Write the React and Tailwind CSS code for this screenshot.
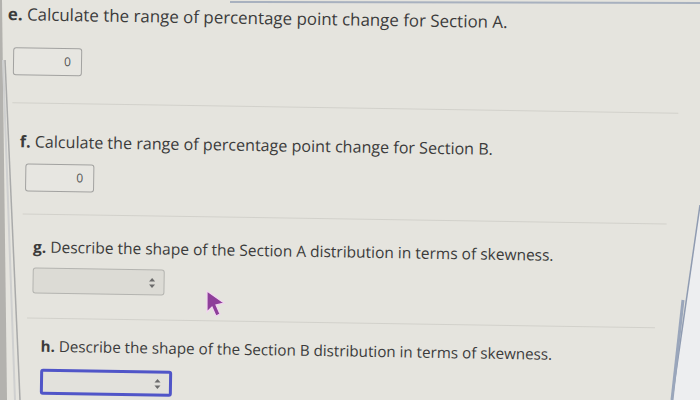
const font = { fontFamily: '"Open Sans", "Liberation Sans", sans-serif' };

function Prompt({ letter, children, className }) {
  return (
    <p className={`leading-6 text-[#3b3b3b] ${className}`}>
      <span className="font-bold">{letter}.</span> {children}
    </p>
  );
}

function NumberBox({ className }) {
  return (
    <div className={`flex h-[28px] w-[69px] items-center justify-end rounded-[3px] border-[1.5px] border-[#a2a2a0] bg-[#e7e6e1] pr-[10px] text-[12px] text-[#555] ${className}`}>
      0
    </div>
  );
}

function Arrows() {
  return (
    <svg width="7" height="11" viewBox="0 0 7 11" className="text-[#6b6b6b]">
      <path d="M3.5 0.5 L6.5 4 L0.5 4 Z" fill="currentColor" />
      <path d="M3.5 10.5 L6.5 7 L0.5 7 Z" fill="currentColor" />
    </svg>
  );
}

function SelectBox({ focused, className }) {
  return (
    <div
      className={`flex h-[26px] w-[132px] items-center justify-end rounded-[3px] pr-[8px] ${
        focused ? "border-[3px] border-[#5055c8] bg-[#e2e1dc]" : "border-[1.5px] border-[#b4b4b0] bg-[#dcdbd5]"
      } ${className}`}
    >
      <Arrows />
    </div>
  );
}

export default function App() {
  return (
    <div className="relative h-[400px] w-[700px] overflow-hidden bg-[#e5e4de]" style={font}>
      <div className="origin-top-left rotate-[0.9deg]">
        <section className="pl-[8px] pt-[2px]">
          <Prompt letter="e" className="text-[16.9px]">Calculate the range of percentage point change for Section A.</Prompt>
          <NumberBox className="ml-[6px] mt-[21px]" />
        </section>
        <div className="ml-[14px] mr-[20px] mt-[27px] border-t border-[#d2d1cb]" />
        <section className="pl-[22px]">
          <Prompt letter="f" className="mt-[26px] text-[16.1px]">Calculate the range of percentage point change for Section B.</Prompt>
          <NumberBox className="ml-[6px] mt-[10px]" />
        </section>
        <div className="ml-[26px] mr-[30px] mt-[22px] border-t border-[#d2d1cb]" />
        <section className="pl-[37px]">
          <Prompt letter="g" className="mt-[20px] text-[15.5px]">Describe the shape of the Section A distribution in terms of skewness.</Prompt>
          <SelectBox className="mt-[9px]" />
        </section>
        <div className="ml-[32px] mr-[40px] mt-[24px] border-t border-[#d2d1cb]" />
        <section className="pl-[46px]">
          <Prompt letter="h" className="mt-[15px] text-[15.2px]">Describe the shape of the Section B distribution in terms of skewness.</Prompt>
          <SelectBox focused className="mt-[11px]" />
        </section>
      </div>

      <svg className="pointer-events-none absolute inset-0" width="700" height="400" viewBox="0 0 700 400">
        <polygon points="0,0 2,0 7,400 0,400" fill="#b3b2ae" />
        <line x1="3" y1="60" x2="15" y2="400" stroke="#cfd0d0" strokeWidth="2" />
        <line x1="5" y1="60" x2="20" y2="400" stroke="#a9aaaa" strokeWidth="1.5" />
        <line x1="230" y1="2" x2="700" y2="3" stroke="#a8b1bf" strokeWidth="2" />
        <polygon points="700,205 700,400 672,400" fill="#edeef0" />
        <line x1="700" y1="205" x2="672" y2="400" stroke="#8f9bb1" strokeWidth="1.5" />
        <line x1="683" y1="300" x2="672" y2="400" stroke="#9aa6bb" strokeWidth="3" />
        <path d="M207 291 L224 303 L216 305 L220 314 L216 316 L212 307 L207 312 Z" fill="#8e3f9a" stroke="#f2d6f0" strokeWidth="1.2" />
      </svg>
    </div>
  );
}
